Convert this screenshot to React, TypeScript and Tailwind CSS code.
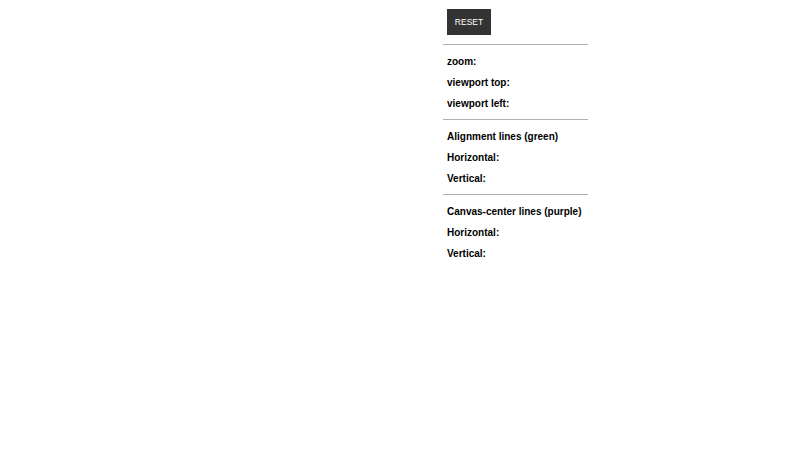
const Row = ({ label }: { label: string }) => (
  <div className="h-[21px] flex items-center px-1 text-[10px] font-bold text-black">{label}</div>
);

export default function App() {
  return (
    <div className="w-[800px] h-[450px] bg-white flex font-['Liberation_Sans',Arial,sans-serif]">
      {/* canvas area */}
      <div className="w-[443px] shrink-0" />

      {/* controls */}
      <div className="w-[145px] flex flex-col pt-[9px]">
        <div className="px-1">
          <button className="w-[44px] h-[26px] bg-[#333333] text-white text-[8.5px] uppercase flex items-center justify-center">
            Reset
          </button>
        </div>
        <div className="mt-[9px] h-px bg-[#b0b0b0]" />
        <div className="pt-[6px] pb-[5px]">
          <Row label="zoom:" />
          <Row label="viewport top:" />
          <Row label="viewport left:" />
        </div>
        <div className="h-px bg-[#b0b0b0]" />
        <div className="pt-[6px] pb-[5px]">
          <Row label="Alignment lines (green)" />
          <Row label="Horizontal:" />
          <Row label="Vertical:" />
        </div>
        <div className="h-px bg-[#b0b0b0]" />
        <div className="pt-[6px] pb-[5px]">
          <Row label="Canvas-center lines (purple)" />
          <Row label="Horizontal:" />
          <Row label="Vertical:" />
        </div>
      </div>
    </div>
  );
}
